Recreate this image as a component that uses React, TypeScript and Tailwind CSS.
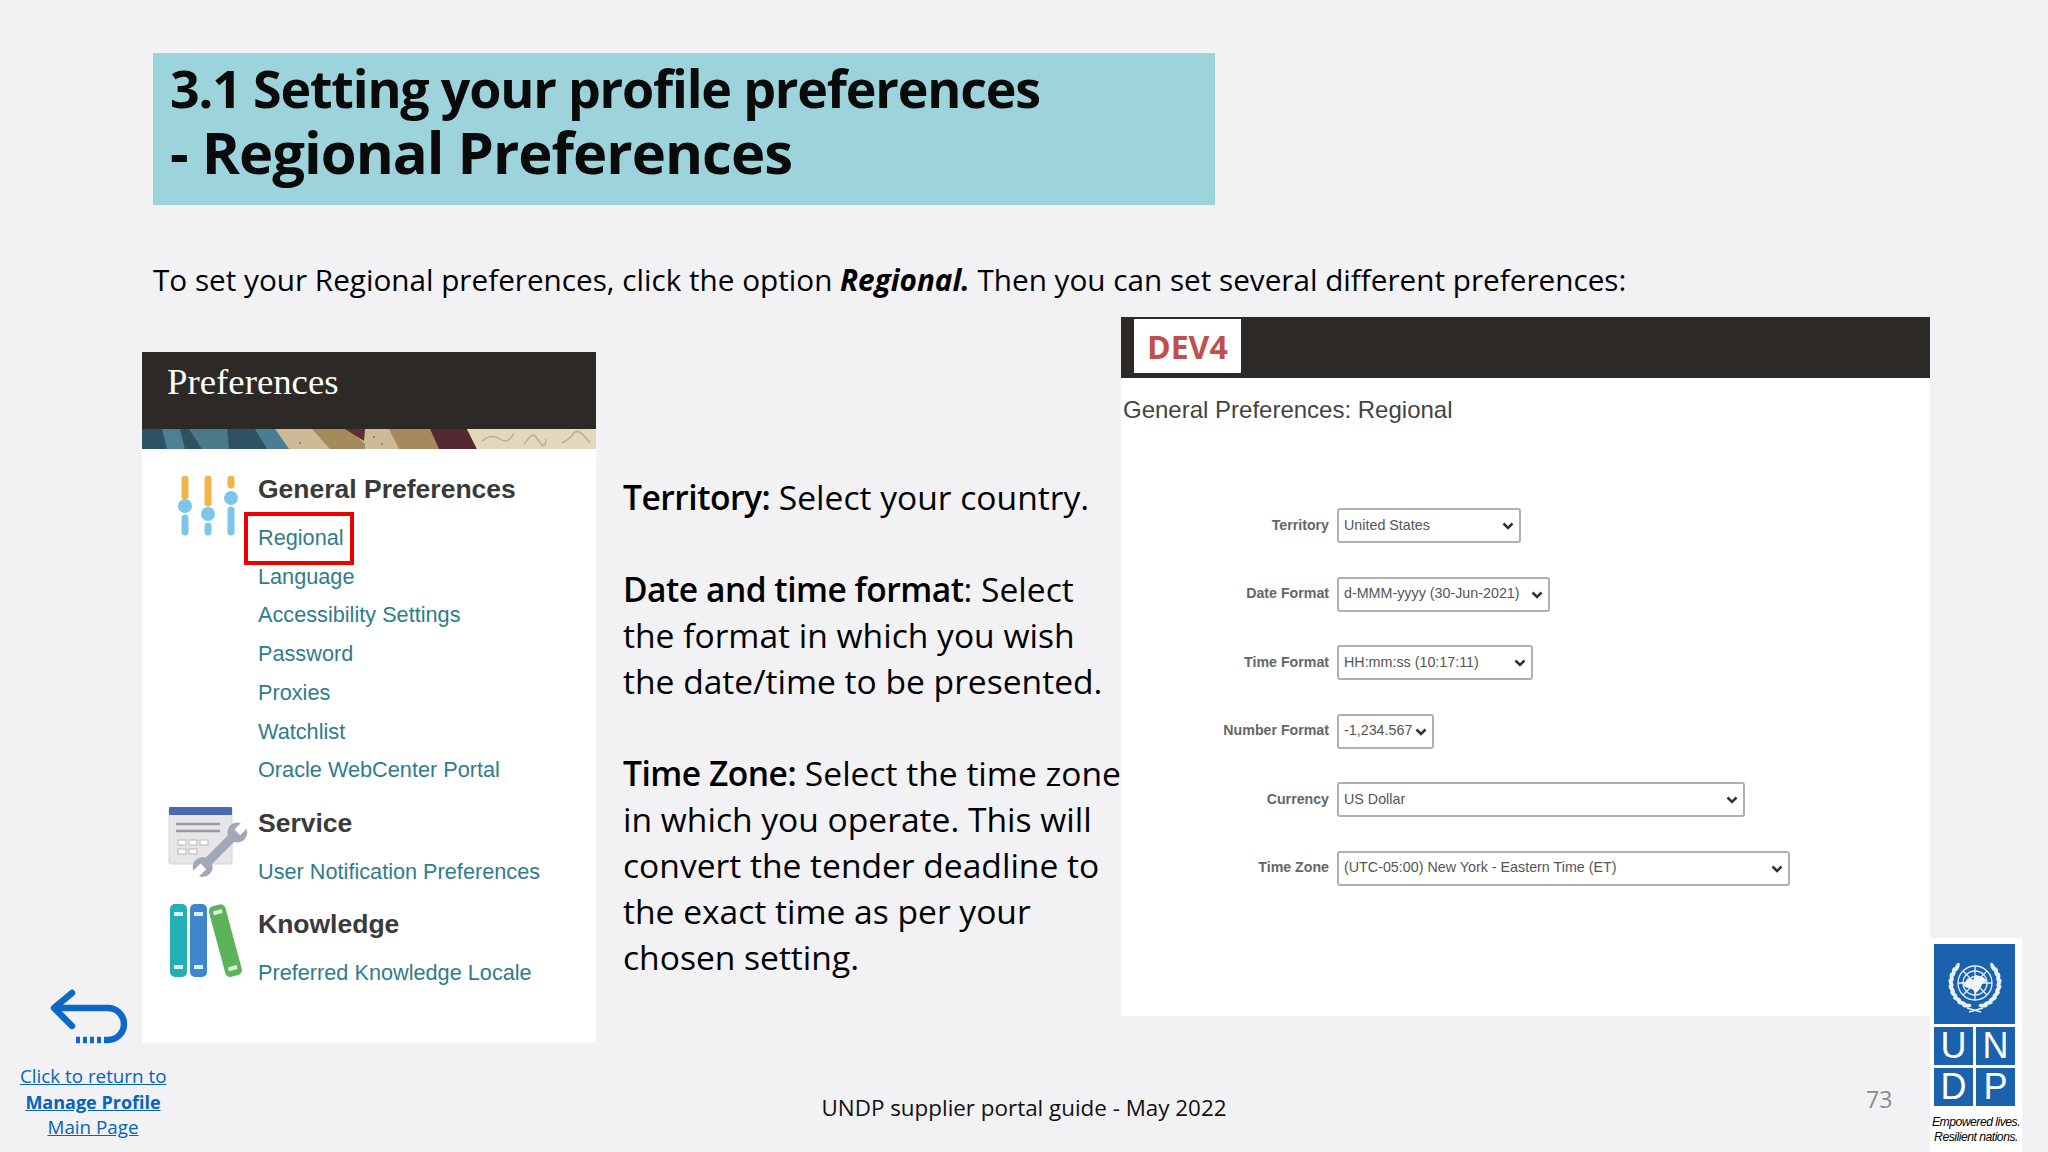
const linkClass = "text-[21.7px] leading-[38.7px] text-[#2f7c8e] whitespace-nowrap"
const headClass = "text-[26.5px] font-bold text-[#3a3a3a] whitespace-nowrap"

const SlidersIcon = () => (
  <svg width="62" height="60" viewBox="0 0 62 60" className="block">
    <g strokeLinecap="round" strokeWidth="7" fill="none">
      <path d="M8 3V20" stroke="#f0b44c" />
      <path d="M31 3V27" stroke="#f0b44c" />
      <path d="M54 3V9" stroke="#f0b44c" />
      <path d="M8 42V56" stroke="#7cc6ee" />
      <path d="M31 50V56" stroke="#7cc6ee" />
      <path d="M54 34V56" stroke="#7cc6ee" />
    </g>
    <circle cx="8" cy="30" r="7" fill="#7cc6ee" />
    <circle cx="31" cy="38" r="7" fill="#7cc6ee" />
    <circle cx="54" cy="22" r="7" fill="#7cc6ee" />
  </svg>
)

const ServiceIcon = () => (
  <svg width="80" height="72" viewBox="0 0 80 72" className="block">
    <rect x="1" y="1" width="63" height="56" rx="2" fill="#e6e6e8" stroke="#d4d4d6" />
    <rect x="1" y="0" width="63" height="8" rx="1" fill="#4a68b4" />
    <path d="M8 17H52M8 24H52" stroke="#9a9a9c" strokeWidth="2.5" />
    <g fill="#fff" stroke="#b8b8ba">
      <rect x="10" y="33" width="8" height="5" />
      <rect x="21" y="33" width="8" height="5" />
      <rect x="32" y="33" width="8" height="5" />
      <rect x="10" y="42" width="8" height="5" />
      <rect x="21" y="42" width="8" height="5" />
    </g>
    <g transform="rotate(-45 52 42)">
      <rect x="30" y="38" width="44" height="9" fill="#a3a8b8" />
      <circle cx="27" cy="42.500" r="10" fill="#a3a8b8" />
      <circle cx="76" cy="42.500" r="10" fill="#a3a8b8" />
      <rect x="15" y="38.500" width="13" height="8" fill="#fff" />
      <rect x="76" y="38.500" width="13" height="8" fill="#fff" />
    </g>
  </svg>
)

const BooksIcon = () => (
  <svg width="76" height="76" viewBox="0 0 76 76" className="block">
    <rect x="0" y="1" width="17" height="73" rx="5" fill="#22b0b4" />
    <rect x="20" y="1" width="17" height="73" rx="5" fill="#3f86cc" />
    <g transform="rotate(-15 56 38)">
      <rect x="47" y="1" width="17" height="73" rx="5" fill="#5cb35a" />
      <rect x="51" y="6" width="9" height="4" fill="#dcefdc" />
      <rect x="51" y="64" width="9" height="4" fill="#dcefdc" />
    </g>
    <g fill="#dff1f2">
      <rect x="4" y="9" width="9" height="4" />
      <rect x="4" y="62" width="9" height="4" />
      <rect x="24" y="9" width="9" height="4" />
      <rect x="24" y="62" width="9" height="4" />
    </g>
  </svg>
)

const BannerStrip = () => (
  <svg width="454" height="20" viewBox="0 0 454 20" className="block">
    <rect width="454" height="20" fill="#2f5262" />
    <path d="M20 0H38L43 20H25Z" fill="#4d8090" />
    <path d="M47 0H85L87 20H60Z" fill="#4b7a8a" />
    <path d="M113 0H133L147 20H125Z" fill="#4a7d92" />
    <path d="M133 0H454V20H147Z" fill="#cdbb98" />
    <path d="M170 0H207L223 15V20H188Z" fill="#a58a5c" />
    <path d="M203 0H223L222 12Z" fill="#5c2f33" />
    <path d="M247 0H288L297 20H257Z" fill="#a58a5c" />
    <path d="M288 0H325L335 20H297Z" fill="#542a32" />
    <path d="M325 0H454V20H335Z" fill="#e4d8bc" />
    <g stroke="#bcae90" strokeWidth="1.5" fill="none">
      <path d="M340 12q10-8 18-2t14-6" />
      <path d="M382 16q8-14 12-8t6 8q4 2 4-6" />
      <path d="M420 14q8-4 12-10t16 10" />
    </g>
    <g fill="#8a7650">
      <circle cx="158" cy="14" r="1" />
      <circle cx="232" cy="8" r="1" />
      <circle cx="240" cy="15" r="1" />
    </g>
  </svg>
)

// leaves of the UN wreath, one side
const wreathAngles = [-42, -28, -14, 0, 14, 28, 42, 56, 70]

const UnEmblem = () => (
  <svg width="64" height="60" viewBox="0 0 64 60" className="block">
    <g fill="none" stroke="#e4eff7" strokeWidth="1.3">
      <circle cx="32" cy="29" r="17" />
      <circle cx="32" cy="29" r="12" />
      <circle cx="32" cy="29" r="6.500" />
      <path d="M32 12V46M15 29H49M20 17L44 41M44 17L20 41" />
    </g>
    <path d="M20 31l5-7 5 2 3-5 7 2 4 4-5 3-3 6-4 4-2-5-5-1-3-1Z" fill="#f0f5fa" />
    {wreathAngles.map((a) => (
      <g key={a}>
        <ellipse cx="56" cy="29" rx="2" ry="4.500" fill="#e8f1f8" transform={`rotate(${a} 32 29) rotate(20 56 29)`} />
        <ellipse cx="8" cy="29" rx="2" ry="4.500" fill="#e8f1f8" transform={`rotate(${-a} 32 29) rotate(-20 8 29)`} />
      </g>
    ))}
    <path d="M24 54L38 58M40 54L26 58" stroke="#e8f1f8" strokeWidth="1.5" />
  </svg>
)

const UndpLogo = () => (
  <div className="absolute right-[26px] top-[938px] w-[92px] h-[214px] bg-white pt-[6px] pl-[4px]">
    <div className="w-[81px] flex flex-col gap-[3px]">
      <div className="h-[80px] bg-[#1a62ad] flex items-center justify-center">
        <UnEmblem />
      </div>
      <div className="grid grid-cols-2 gap-[3px]">
        {["U", "N", "D", "P"].map((l) => (
          <div
            key={l}
            className="h-[38px] bg-[#1a62ad] flex items-center justify-center text-white text-[36px] font-['Liberation_Sans'] leading-none"
          >
            {l}
          </div>
        ))}
      </div>
    </div>
    <div className="mt-[9px] -ml-[4px] w-[92px] text-center text-[12.2px] leading-[14.5px] italic text-black font-['Liberation_Sans'] tracking-[-0.5px] whitespace-nowrap">
      Empowered lives.
      <br />
      Resilient nations.
    </div>
  </div>
)

const FormRow = ({ label, value, width }: { label: string; value: string; width: string }) => (
  <div className="flex items-center h-[35px] mb-[33.500px]">
    <div className="w-[216px] pr-[8px] text-right text-[14.200px] font-bold text-[#666] whitespace-nowrap">{label}</div>
    <div className={`${width} relative`}>
      <select
        defaultValue={value}
        className="w-full h-[35px] appearance-none bg-white border-2 border-[#b0b0b0] rounded-[3px] pl-[5px] text-[14.300px] text-[#555]"
      >
        <option>{value}</option>
      </select>
      <svg width="12" height="8" viewBox="0 0 12 8" fill="none" stroke="#333" strokeWidth="2.500" className="absolute right-[7px] top-[14px] pointer-events-none">
        <path d="M1.500 1.500L6 6L10.500 1.500" />
      </svg>
    </div>
  </div>
)

export default function App() {
  return (
    <div className="relative w-[2048px] h-[1152px] overflow-hidden bg-[#f2f2f4] font-['Open_Sans',sans-serif] text-black">
      <div className="ml-[153px] pt-[53px]">
        <div className="w-[1062px] h-[152px] bg-[#9dd3da] pl-[17px] pt-[3px] font-bold text-[#0a0a0a] whitespace-nowrap">
          <div className="text-[52px] leading-[63px] tracking-[-1.2px]">3.1 Setting your profile preferences</div>
          <div className="text-[58px] leading-[65px] tracking-[-1px]">- Regional Preferences</div>
        </div>
        <p className="mt-[55px] text-[29.700px] leading-[40px] whitespace-nowrap">
          To set your Regional preferences, click the option <b className="italic">Regional.</b> Then you can set several different preferences:
        </p>
      </div>

      <div className="flex items-start ml-[142px] mt-[17px] font-['Liberation_Sans',sans-serif]">
        {/* left panel */}
        <div className="w-[454px] h-[691px] mt-[35px] bg-white shrink-0">
          <div className="h-[77px] bg-[#2d2927] pl-[25px] pt-[10px] text-[36.800px] leading-[40px] text-white font-['Liberation_Serif',serif]">
            Preferences
          </div>
          <BannerStrip />
          <div className="pt-[20px] pl-[35px]">
            <div className="flex">
              <div className="w-[81px] pt-[7px]">
                <SlidersIcon />
              </div>
              <div>
                <div className={`${headClass} h-[50px] leading-[40px]`}>General Preferences</div>
                <div className={`${linkClass} relative w-fit`}>
                  Regional
                  <span className="absolute -left-[14px] -right-[10px] -top-[7px] -bottom-[7px] border-4 border-[#ee0000]" />
                </div>
                {["Language", "Accessibility Settings", "Password", "Proxies", "Watchlist", "Oracle WebCenter Portal"].map((t) => (
                  <div key={t} className={linkClass}>
                    {t}
                  </div>
                ))}
              </div>
            </div>
            <div className="flex mt-[11px] -ml-[9px]">
              <div className="w-[90px] pt-[6px]">
                <ServiceIcon />
              </div>
              <div>
                <div className={`${headClass} h-[44px] leading-[44px]`}>Service</div>
                <div className={linkClass + " mt-[8px]"}>User Notification Preferences</div>
              </div>
            </div>
            <div className="flex mt-[10px] -ml-[7px]">
              <div className="w-[88px] pt-[1px]">
                <BooksIcon />
              </div>
              <div>
                <div className={`${headClass} h-[44px] leading-[44px]`}>Knowledge</div>
                <div className={linkClass + " mt-[8px]"}>Preferred Knowledge Locale</div>
              </div>
            </div>
          </div>
        </div>

        {/* middle text */}
        <div className="relative z-10 w-[498px] shrink-0 ml-[27px] mt-[157px] text-[33.600px] leading-[46px] whitespace-nowrap font-['Open_Sans',sans-serif]">
          <p className="mb-[46px]">
            <b className="font-semibold tracking-[-0.5px]">Territory:</b> Select your country.
          </p>
          <p className="mb-[46px]">
            <b className="font-semibold tracking-[-0.5px]">Date and time format</b>: Select
            <br />
            the format in which you wish
            <br />
            the date/time to be presented.
          </p>
          <p>
            <b className="font-semibold tracking-[-0.5px]">Time Zone:</b> Select the time zone
            <br />
            in which you operate. This will
            <br />
            convert the tender deadline to
            <br />
            the exact time as per your
            <br />
            chosen setting.
          </p>
        </div>

        {/* right panel */}
        <div className="w-[809px] h-[699px] bg-white shrink-0">
          <div className="h-[61px] bg-[#2d2927] pl-[13px] pt-[2px]">
            <div className="w-[107px] h-[54px] bg-white pl-[13px] pt-[1px] text-[32px] leading-[54px] font-bold text-[#c0504d] font-['Open_Sans',sans-serif]">
              DEV4
            </div>
          </div>
          <div className="pl-[2px] pt-[16px] text-[24px] leading-[32px] text-[#444]">General Preferences: Regional</div>
          <div className="pt-[82px]">
            <FormRow label="Territory" value="United States" width="w-[184px]" />
            <FormRow label="Date Format" value="d-MMM-yyyy (30-Jun-2021)" width="w-[213px]" />
            <FormRow label="Time Format" value="HH:mm:ss (10:17:11)" width="w-[196px]" />
            <FormRow label="Number Format" value="-1,234.567" width="w-[97px]" />
            <FormRow label="Currency" value="US Dollar" width="w-[408px]" />
            <FormRow label="Time Zone" value="(UTC-05:00) New York - Eastern Time (ET)" width="w-[453px]" />
          </div>
        </div>
      </div>

      {/* return link */}
      <div className="absolute left-[20px] top-[988px] w-[146px] text-center text-[18.800px] leading-[25.500px] text-[#0563c1] whitespace-nowrap">
        <svg width="78" height="58" viewBox="0 0 78 58" className="block ml-[30px] mb-[18px]" fill="none" stroke="#0f67c6" strokeWidth="6.500">
          <path d="M22 5L4 20L22 38" strokeLinecap="round" strokeLinejoin="round" />
          <path d="M4 20H58A16 16 0 0 1 58 52" />
          <path d="M26 52H58" strokeDasharray="4 3" />
        </svg>
        <div className="underline">Click to return to</div>
        <div className="underline font-bold text-[18px]">Manage Profile</div>
        <div className="underline">Main Page</div>
      </div>

      {/* footer */}
      <div className="absolute left-0 right-0 top-[1093px] text-center text-[22.400px] leading-[30px] text-[#111]">
        UNDP supplier portal guide - May 2022
      </div>
      <div className="absolute left-[1866px] top-[1082px] text-[23px] leading-[34px] text-[#8a8a8a]">73</div>

      <UndpLogo />
    </div>
  )
}
